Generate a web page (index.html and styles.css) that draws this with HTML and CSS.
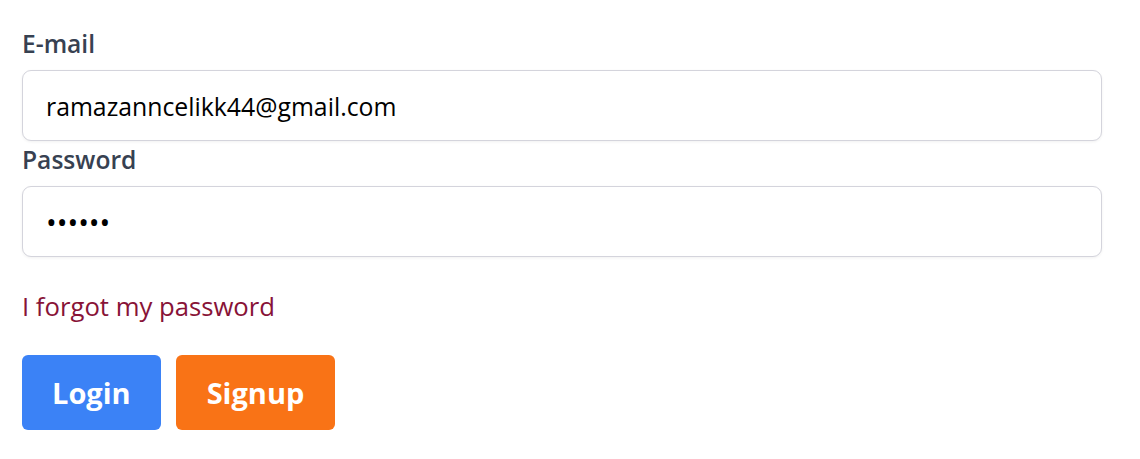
FILE: index.html
```html
<!DOCTYPE html>
<html lang="en">
<head>
<meta charset="utf-8">
<title>Login</title>
<link rel="stylesheet" href="styles.css">
</head>
<body>
<form class="login-form">
  <label class="field-label" for="email">E-mail</label>
  <input class="field-input" id="email" type="email" value="ramazanncelikk44@gmail.com">
  <label class="field-label" for="password">Password</label>
  <input class="field-input field-password" id="password" type="password" value="123456">
  <a class="forgot-link" href="#">I forgot my password</a>
  <div class="actions">
    <button class="btn btn-login" type="button">Login</button>
    <button class="btn btn-signup" type="button">Signup</button>
  </div>
</form>
</body>
</html>
```
FILE: styles.css
```css
html, body {
  margin: 0;
  padding: 0;
  background: #ffffff;
}

body {
  font-family: "Open Sans", "Noto Sans", "Liberation Sans", sans-serif;
}

.login-form {
  display: flex;
  flex-direction: column;
  align-items: flex-start;
  width: 1080px;
  padding: 25px 0 0 22px;
}

.field-label {
  display: block;
  font-size: 24.6px;
  line-height: 38px;
  font-weight: 600;
  color: #374151;
  margin-bottom: 7px;
}

.field-input {
  box-sizing: border-box;
  width: 1080px;
  height: 71px;
  margin: 0;
  padding: 0 23px;
  border: 1px solid #d4d4dc;
  border-radius: 9px;
  box-shadow: 0 1px 3px rgba(0, 0, 0, 0.06);
  font-family: inherit;
  font-size: 24.8px;
  color: #000000;
  background: #ffffff;
  outline: none;
}

.field-password {
  font-size: 28.5px;
}

.forgot-link {
  display: block;
  margin-top: 32px;
  font-size: 25.7px;
  line-height: 36px;
  color: #881337;
  text-decoration: none;
}

.actions {
  display: flex;
  gap: 15px;
  margin-top: 30px;
}

.btn {
  box-sizing: border-box;
  height: 75px;
  padding: 0 30px;
  border: none;
  border-radius: 6px;
  font-family: inherit;
  font-size: 29px;
  font-weight: 700;
  color: #ffffff;
  cursor: pointer;
}

.btn-login {
  background: #3b82f6;
}

.btn-signup {
  padding: 0 31px;
  background: #f97316;
}
```
